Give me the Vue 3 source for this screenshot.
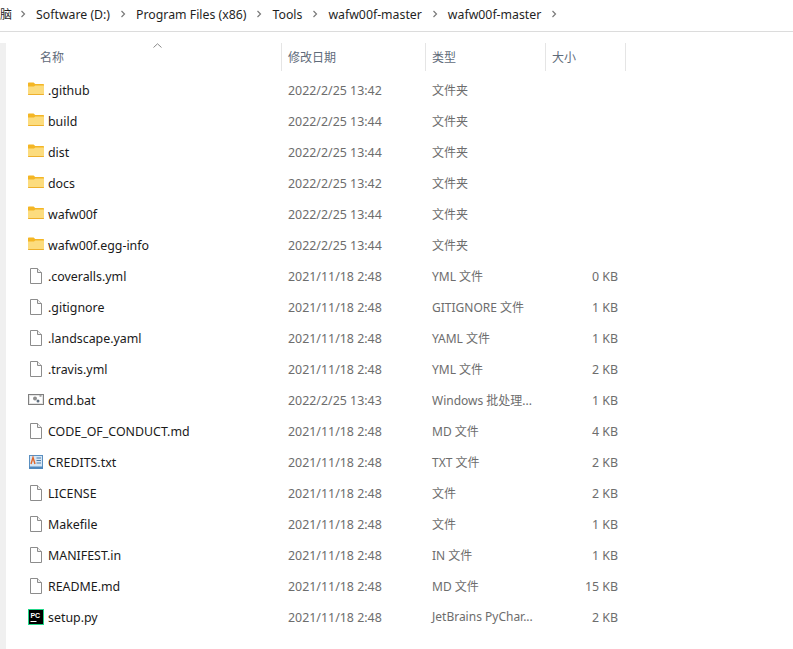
<script setup>
const crumbs = ['Software (D:)', 'Program Files (x86)', 'Tools', 'wafw00f-master', 'wafw00f-master']
const columns = [
  { label: '名称', cls: 'h-name' },
  { label: '修改日期', cls: 'h-date' },
  { label: '类型', cls: 'h-type' },
  { label: '大小', cls: 'h-size' }
]
const files = [
  { name: '.github', date: '2022/2/25 13:42', type: '文件夹', size: '', icon: 'folder' },
  { name: 'build', date: '2022/2/25 13:44', type: '文件夹', size: '', icon: 'folder' },
  { name: 'dist', date: '2022/2/25 13:44', type: '文件夹', size: '', icon: 'folder' },
  { name: 'docs', date: '2022/2/25 13:42', type: '文件夹', size: '', icon: 'folder' },
  { name: 'wafw00f', date: '2022/2/25 13:44', type: '文件夹', size: '', icon: 'folder' },
  { name: 'wafw00f.egg-info', date: '2022/2/25 13:44', type: '文件夹', size: '', icon: 'folder' },
  { name: '.coveralls.yml', date: '2021/11/18 2:48', type: 'YML 文件', size: '0 KB', icon: 'file' },
  { name: '.gitignore', date: '2021/11/18 2:48', type: 'GITIGNORE 文件', size: '1 KB', icon: 'file' },
  { name: '.landscape.yaml', date: '2021/11/18 2:48', type: 'YAML 文件', size: '1 KB', icon: 'file' },
  { name: '.travis.yml', date: '2021/11/18 2:48', type: 'YML 文件', size: '2 KB', icon: 'file' },
  { name: 'cmd.bat', date: '2022/2/25 13:43', type: 'Windows 批处理...', size: '1 KB', icon: 'bat' },
  { name: 'CODE_OF_CONDUCT.md', date: '2021/11/18 2:48', type: 'MD 文件', size: '4 KB', icon: 'file' },
  { name: 'CREDITS.txt', date: '2021/11/18 2:48', type: 'TXT 文件', size: '2 KB', icon: 'txt' },
  { name: 'LICENSE', date: '2021/11/18 2:48', type: '文件', size: '2 KB', icon: 'file' },
  { name: 'Makefile', date: '2021/11/18 2:48', type: '文件', size: '1 KB', icon: 'file' },
  { name: 'MANIFEST.in', date: '2021/11/18 2:48', type: 'IN 文件', size: '1 KB', icon: 'file' },
  { name: 'README.md', date: '2021/11/18 2:48', type: 'MD 文件', size: '15 KB', icon: 'file' },
  { name: 'setup.py', date: '2021/11/18 2:48', type: 'JetBrains PyChar...', size: '2 KB', icon: 'pc' }
]
</script>

<template>
  <div class="window">
    <nav class="crumbs">
      <span class="crumb clip">脑</span>
      <template v-for="c in crumbs" :key="c">
        <svg class="chev" width="6" height="8" viewBox="0 0 6 8"><path d="M1.5 1 L4.5 4 L1.5 7" fill="none" stroke="#7a7a7a" stroke-width="1.2" /></svg>
        <span class="crumb">{{ c }}</span>
      </template>
      <svg class="chev" width="6" height="8" viewBox="0 0 6 8"><path d="M1.5 1 L4.5 4 L1.5 7" fill="none" stroke="#7a7a7a" stroke-width="1.2" /></svg>
    </nav>
    <div class="body">
      <div class="strip"></div>
      <div class="list">
        <header class="head">
          <div v-for="c in columns" :key="c.label" class="hcell" :class="c.cls">{{ c.label }}</div>
          <svg class="sort" width="9" height="5" viewBox="0 0 9 5"><path d="M0.5 4.5 L4.5 0.8 L8.5 4.5" fill="none" stroke="#8a8a8a" stroke-width="1" /></svg>
        </header>
        <div class="rows">
          <div v-for="f in files" :key="f.name" class="row">
            <div class="name">
              <svg v-if="f.icon === 'folder'" class="icon" width="16" height="16" viewBox="0 0 16 16">
                <path d="M0 1.2 Q0 .5 .7 .5 H5.6 L7.2 2 H15.3 Q16 2 16 2.7 V6 H0 Z" fill="#f4b625" />
                <path d="M0 4.6 L6 4.6 L7.2 3.6 H16 V12.3 Q16 13 15.3 13 H.7 Q0 13 0 12.3 Z" fill="#fcdc7e" />
                <path d="M0 12 H16 V12.3 Q16 13 15.3 13 H.7 Q0 13 0 12.3 Z" fill="#eeb02c" />
              </svg>
              <svg v-else-if="f.icon === 'file'" class="icon" width="16" height="16" viewBox="0 0 16 16">
                <path d="M2.5 .5 H9.5 L13.5 4.5 V15.5 H2.5 Z" fill="#fff" stroke="#8c8c8c" />
                <path d="M9.5 .5 V4.5 H13.5" fill="#f0f0f0" stroke="#8c8c8c" />
              </svg>
              <svg v-else-if="f.icon === 'bat'" class="icon" width="16" height="16" viewBox="0 0 16 16">
                <rect x=".5" y="2.5" width="15" height="10" fill="#e4e4e4" stroke="#7f7f7f" />
                <rect x="2" y="4" width="12" height="7" fill="#fff" />
                <circle cx="7" cy="6.5" r="2" fill="#8d8d8d" />
                <circle cx="10" cy="9" r="1.5" fill="#5f6f7f" />
                <rect x="11.5" y="3.5" width="2" height="1" fill="#666" />
              </svg>
              <svg v-else-if="f.icon === 'txt'" class="icon" width="16" height="16" viewBox="0 0 16 16">
                <rect x="1.5" y="1.5" width="13" height="13" fill="#d6e6f5" stroke="#5a8fc0" />
                <rect x="1" y="12.5" width="14" height="2.5" fill="#4e87bd" />
                <path d="M3 10 L5 3.5 L7 10" fill="none" stroke="#e0662a" stroke-width="1.4" />
                <path d="M8.5 4 H13 M8.5 6.5 H13 M8.5 9 H13" stroke="#4d7ca8" stroke-width="1" />
              </svg>
              <svg v-else class="icon" width="16" height="16" viewBox="0 0 16 16">
                <rect width="16" height="16" fill="#21d789" />
                <rect x="1" y="1" width="14" height="14" fill="#000" />
                <rect x="2.5" y="12" width="6" height="1" fill="#fff" />
                <text x="2.4" y="9" class="pc">PC</text>
              </svg>
              <span class="fname">{{ f.name }}</span>
            </div>
            <div class="date">{{ f.date }}</div>
            <div class="type">{{ f.type }}</div>
            <div class="size">{{ f.size }}</div>
          </div>
        </div>
      </div>
    </div>
  </div>
</template>

<style>
html, body { margin: 0; background: #fff; }
</style>

<style scoped>
.window {
  width: 793px;
  height: 649px;
  overflow: hidden;
  background: #fff;
  font-family: "Noto Sans", "Noto Sans CJK SC", sans-serif;
  font-size: 12px;
}
.crumbs {
  height: 32px;
  box-sizing: border-box;
  border-bottom: 1px solid #dcdcdc;
  display: flex;
  align-items: center;
  gap: 10px;
  padding-bottom: 3px;
  color: #1f1f1f;
  font-size: 12.3px;
  white-space: nowrap;
}
.clip { font-size: 12px; margin-right: -2px; }
.chev { flex: none; }
.body {
  display: flex;
  padding-top: 11px;
}
.strip {
  width: 6px;
  height: 606px;
  background: #f0f0f0;
  flex: none;
}
.list { flex: 1; }
.head {
  position: relative;
  display: grid;
  grid-template-columns: 276px 144px 120px 80px;
  height: 28px;
  color: #5f6b7a;
}
.hcell {
  display: flex;
  align-items: center;
  padding-left: 6px;
  border-right: 1px solid #e5e5e5;
}
.h-name { padding-left: 34px; }
.sort { position: absolute; left: 147px; top: 0; }
.rows { padding-top: 3px; }
.row {
  display: grid;
  grid-template-columns: 276px 144px 114px 78px;
  height: 31px;
  align-items: center;
  color: #6d6d6d;
}
.name {
  display: flex;
  align-items: center;
  gap: 4px;
  padding-left: 22px;
  color: #1a1a1a;
  font-size: 12.4px;
  padding-top: 1px;
}
.icon { flex: none; }
.date { padding-left: 6px; font-size: 12.4px; padding-top: 1px; }
.type { padding-left: 6px; white-space: nowrap; }
.size { text-align: right; font-size: 12.4px; padding-top: 1px; }
.pc {
  font-family: "Liberation Sans", sans-serif;
  font-size: 7px;
  font-weight: 700;
  fill: #fff;
}
</style>
